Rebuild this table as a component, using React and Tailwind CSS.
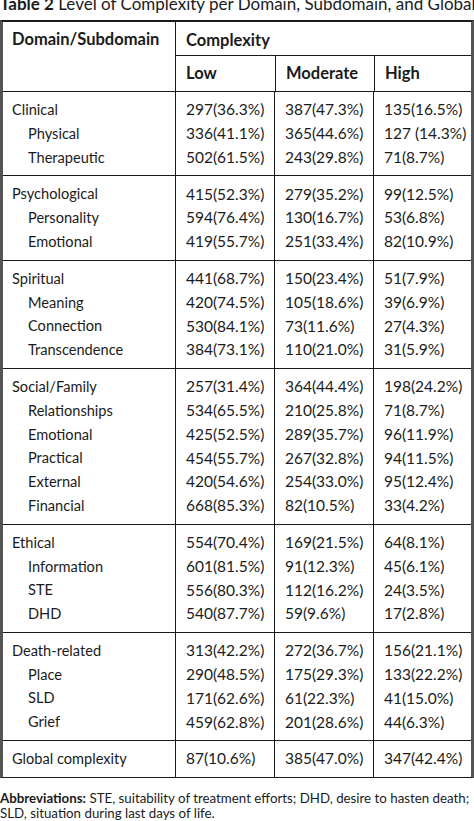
import React from "react";

const groups = [
  [
    ["Clinical", "297(36.3%)", "387(47.3%)", "135(16.5%)"],
    ["Physical", "336(41.1%)", "365(44.6%)", "127 (14.3%)"],
    ["Therapeutic", "502(61.5%)", "243(29.8%)", "71(8.7%)"],
  ],
  [
    ["Psychological", "415(52.3%)", "279(35.2%)", "99(12.5%)"],
    ["Personality", "594(76.4%)", "130(16.7%)", "53(6.8%)"],
    ["Emotional", "419(55.7%)", "251(33.4%)", "82(10.9%)"],
  ],
  [
    ["Spiritual", "441(68.7%)", "150(23.4%)", "51(7.9%)"],
    ["Meaning", "420(74.5%)", "105(18.6%)", "39(6.9%)"],
    ["Connection", "530(84.1%)", "73(11.6%)", "27(4.3%)"],
    ["Transcendence", "384(73.1%)", "110(21.0%)", "31(5.9%)"],
  ],
  [
    ["Social/Family", "257(31.4%)", "364(44.4%)", "198(24.2%)"],
    ["Relationships", "534(65.5%)", "210(25.8%)", "71(8.7%)"],
    ["Emotional", "425(52.5%)", "289(35.7%)", "96(11.9%)"],
    ["Practical", "454(55.7%)", "267(32.8%)", "94(11.5%)"],
    ["External", "420(54.6%)", "254(33.0%)", "95(12.4%)"],
    ["Financial", "668(85.3%)", "82(10.5%)", "33(4.2%)"],
  ],
  [
    ["Ethical", "554(70.4%)", "169(21.5%)", "64(8.1%)"],
    ["Information", "601(81.5%)", "91(12.3%)", "45(6.1%)"],
    ["STE", "556(80.3%)", "112(16.2%)", "24(3.5%)"],
    ["DHD", "540(87.7%)", "59(9.6%)", "17(2.8%)"],
  ],
  [
    ["Death-related", "313(42.2%)", "272(36.7%)", "156(21.1%)"],
    ["Place", "290(48.5%)", "175(29.3%)", "133(22.2%)"],
    ["SLD", "171(62.6%)", "61(22.3%)", "41(15.0%)"],
    ["Grief", "459(62.8%)", "201(28.6%)", "44(6.3%)"],
  ],
  [["Global complexity", "87(10.6%)", "385(47.0%)", "347(42.4%)"]],
];

export default function App() {
  return (
    <div
      className="w-[474px] h-[821px] overflow-hidden bg-white text-[#1b1b1b]"
      style={{ fontFamily: "Lato, 'Open Sans', sans-serif" }}
    >
      <div className="h-[20px] overflow-hidden whitespace-nowrap">
        <div className="mt-[-8px] text-[17px] leading-[24px]">
          <span className="font-bold">Table 2</span> Level of Complexity per Domain, Subdomain, and Global Levels
        </div>
      </div>
      <div className="border-t-2 border-b border-l-[3px] border-r-[3px] border-t-[#1b1b1b] border-b-[#1b1b1b] border-l-[#555] border-r-[#555]">
        <div className="flex border-b border-[#1b1b1b] text-[16.5px] font-bold">
          <div className="w-[172px] pl-[9px] pt-[5px] leading-[24px]">Domain/Subdomain</div>
          <div className="flex-1 border-l border-[#1b1b1b]">
            <div className="h-[34px] pl-[10px] flex items-center pt-[3px] border-b border-[#1b1b1b]">
              Complexity
            </div>
            <div className="flex h-[35px]">
              <div className="w-[99px] pl-[10px] flex items-center">Low</div>
              <div className="w-[99px] pl-[10px] flex items-center border-l border-[#1b1b1b]">Moderate</div>
              <div className="flex-1 pl-[10px] flex items-center border-l border-[#1b1b1b]">High</div>
            </div>
          </div>
        </div>
        {groups.map((g, gi) => (
          <div
            key={gi}
            className={`flex ${gi < groups.length - 1 ? "border-b border-[#1b1b1b]" : ""}`}
          >
            <div className="w-[172px] py-[6px] text-[14.6px]">
              {g.map((r, ri) => (
                <div
                  key={ri}
                  className={`h-[23.8px] flex items-center whitespace-nowrap ${ri === 0 ? "pl-[9px]" : "pl-[25px]"}`}
                >
                  {r[0]}
                </div>
              ))}
            </div>
            {[1, 2, 3].map((c) => (
              <div
                key={c}
                className={`py-[6px] text-[15.5px] border-l border-[#1b1b1b] ${c < 3 ? "w-[99px]" : "flex-1"}`}
              >
                {g.map((r, ri) => (
                  <div key={ri} className="h-[23.8px] pl-[10px] flex items-center whitespace-nowrap">
                    {r[c]}
                  </div>
                ))}
              </div>
            ))}
          </div>
        ))}
      </div>
      <div className="mt-[13px] text-[13.3px] leading-[15px] whitespace-nowrap">
        <div>
          <span className="font-bold">Abbreviations:</span> STE, suitability of treatment efforts; DHD, desire to hasten death;
        </div>
        <div>SLD, situation during last days of life.</div>
      </div>
    </div>
  );
}
